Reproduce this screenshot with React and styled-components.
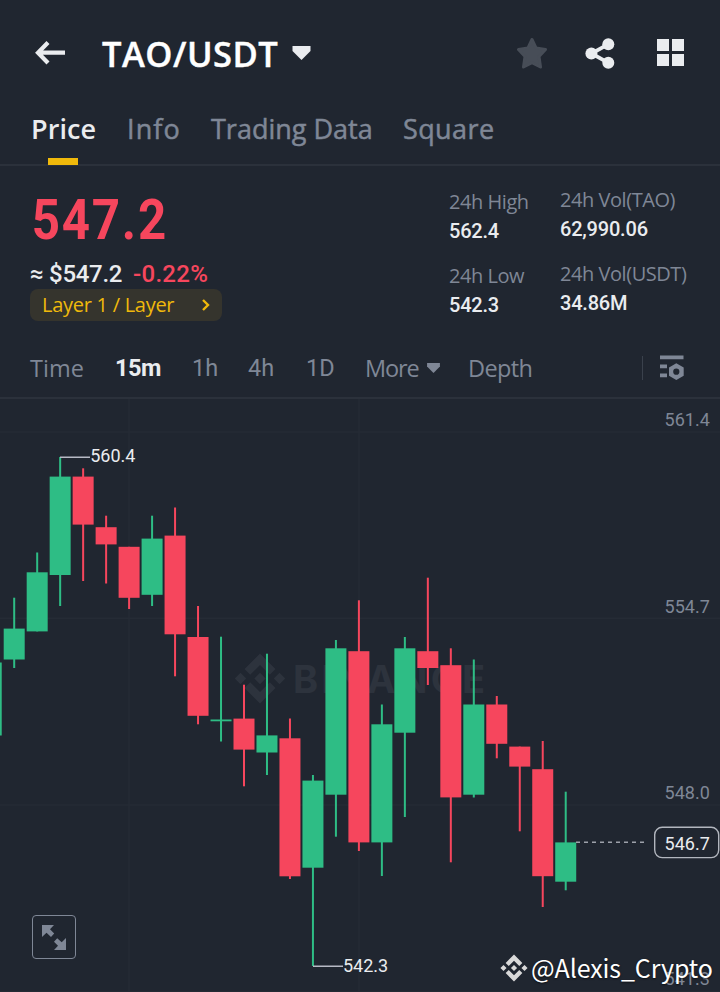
import React from "react";
import styled, { createGlobalStyle } from "styled-components";

const colors = {
  bg: "#202630",
  line: "#2b313b",
  text: "#eaecef",
  muted: "#7f8796",
  up: "#2ebd85",
  down: "#f6465d",
  accent: "#f0b90b"
};

const words = `"Open Sans", "Noto Sans", sans-serif`;
const digits = `Roboto, "Liberation Sans", sans-serif`;

const GlobalStyle = createGlobalStyle`
  body {
    margin: 0;
    background: ${colors.bg};
  }
`;

const Screen = styled.main`
  display: flex;
  flex-direction: column;
  width: 720px;
  height: 992px;
  overflow: hidden;
  background: ${colors.bg};
  color: ${colors.text};
  font-family: ${words};
  white-space: nowrap;
`;

const Header = styled.header`
  display: flex;
  align-items: center;
  height: 106px;
  padding: 0 36px 0 35px;
  box-sizing: border-box;

  svg {
    display: block;
    flex: none;
  }
`;

const Pair = styled.h1`
  width: 190px;
  margin: 2px 0 0 37px;
  color: #fff;
  font-size: 34.5px;
  font-weight: 600;
  line-height: 48px;
  letter-spacing: 0.5px;
  -webkit-text-stroke: 0.4px;
`;

const Actions = styled.div`
  display: flex;
  align-items: center;
  gap: 38px;
  margin-left: auto;

  svg:last-child {
    margin-left: 4px;
  }
`;

const Tabs = styled.nav`
  display: flex;
  height: 60px;
  padding-left: 31px;
  box-sizing: border-box;
  border-bottom: 2px solid ${colors.line};
`;

const Tab = styled.div`
  position: relative;
  width: ${p => p.$width}px;
  margin-right: 31px;
  color: ${p => (p.$active ? colors.text : colors.muted)};
  font-size: 27px;
  font-weight: ${p => (p.$active ? 600 : 500)};
  line-height: 45px;
  letter-spacing: ${p => p.$spacing || 0}px;
  -webkit-text-stroke: ${p => (p.$active ? 0 : 0.5)}px;

  &::after {
    content: "";
    display: ${p => (p.$active ? "block" : "none")};
    position: absolute;
    left: 17px;
    top: 52px;
    width: 30px;
    height: 6.5px;
    background: ${colors.accent};
  }
`;

const Summary = styled.section`
  display: flex;
  height: 170px;
  padding-left: 30px;
  box-sizing: border-box;
`;

const Quote = styled.div`
  width: 419px;
  padding-top: 22px;
`;

const LastPrice = styled.div`
  height: 72px;
  padding-left: 2px;
  color: ${colors.down};
  font: 700 56px/64px ${digits};
  letter-spacing: 2px;
  transform: scaleX(0.88);
  transform-origin: left;
`;

const Converted = styled.div`
  display: flex;
  height: 29px;
  font: 500 24px/28px ${digits};
`;

const Fiat = styled.span`
  width: 103px;
  letter-spacing: -0.3px;
`;

const Change = styled.span`
  color: ${colors.down};
  letter-spacing: 0.3px;
`;

const Tag = styled.div`
  display: flex;
  align-items: center;
  justify-content: space-between;
  width: 192px;
  height: 32px;
  padding: 0 12px 1px;
  box-sizing: border-box;
  border-radius: 8px;
  background: #35342d;
  color: ${colors.accent};
  font-size: 20px;
  line-height: 28px;
  letter-spacing: -0.27px;
`;

const Stats = styled.div`
  width: ${p => p.$width}px;
  padding-top: ${p => p.$top}px;
`;

const Stat = styled.div`
  height: 74px;
`;

const StatLabel = styled.div`
  color: ${colors.muted};
  font-size: 20px;
  line-height: 28px;
  letter-spacing: -0.45px;
`;

const StatValue = styled.div`
  font: 500 20px/30px ${digits};
  letter-spacing: -0.2px;
`;

const Intervals = styled.nav`
  display: flex;
  align-items: center;
  height: 63px;
  padding: 2px 36px 0 30px;
  box-sizing: border-box;
  border-bottom: 2px solid ${colors.line};

  svg {
    display: block;
    flex: none;
  }
`;

const Interval = styled.div`
  display: flex;
  align-items: center;
  gap: 8px;
  width: ${p => p.$width}px;
  color: ${p => (p.$active ? colors.text : colors.muted)};
  font-family: ${p => (p.$numeric ? digits : words)};
  font-size: 23.5px;
  font-weight: ${p => (p.$active ? 700 : 400)};
  line-height: 32px;
  letter-spacing: ${p => p.$spacing || 0}px;
`;

const Divider = styled.div`
  width: 1px;
  height: 24px;
  margin: 0 17px 0 auto;
  background: #3a414c;
`;

const ChartArea = styled.section`
  position: relative;
  height: 593px;

  > svg {
    display: block;
  }
`;

const ExpandButton = styled.button`
  position: absolute;
  left: 32px;
  top: 516px;
  display: flex;
  align-items: center;
  justify-content: center;
  width: 44px;
  height: 44px;
  padding: 0;
  border: 1.5px solid ${colors.muted};
  border-radius: 4px;
  background: none;
`;

const Author = styled.div`
  position: absolute;
  left: 500px;
  top: 550px;
  display: flex;
  align-items: center;
  gap: 3px;
  height: 38px;
  color: #fff;
  font: 400 25px/38px "Noto Sans CJK SC", sans-serif;
  letter-spacing: -0.1px;
  text-shadow: 0 1px 2px rgba(0, 0, 0, 0.6);
`;

const AuthorName = styled.span`
  margin-top: -3px;
`;

const BackIcon = () => (
  <svg width="30" height="24" viewBox="0 0 30 24">
    <path
      d="M30 11.7H3.5M13 1.5L3 11.7L13 22"
      fill="none"
      stroke={colors.text}
      strokeWidth="4.2"
    />
  </svg>
);

const Caret = ({ width, height, color }) => (
  <svg width={width} height={height} viewBox="0 0 18 14">
    <path d="M0 0H18V5L9 14L0 5Z" fill={color} />
  </svg>
);

const StarIcon = () => (
  <svg width="30" height="31" viewBox="0 0 30 31">
    <path
      d="M15 1.5L19 10L28.5 11.5L22 18.5L23.5 29L15 24.6L6.5 29L8 18.5L1.5 11.5L11 10Z"
      fill="#474d57"
      stroke="#474d57"
      strokeWidth="3"
      strokeLinejoin="round"
    />
  </svg>
);

const ShareIcon = () => (
  <svg width="30" height="31" viewBox="0 0 30 31">
    <path
      d="M23 6.3L6.5 15.5L23 24.7"
      fill="none"
      stroke={colors.text}
      strokeWidth="3.8"
    />
    <g fill={colors.text}>
      <circle cx="23.3" cy="6.2" r="6" />
      <circle cx="6.4" cy="15.5" r="6" />
      <circle cx="23.3" cy="24.7" r="6" />
    </g>
  </svg>
);

const GridIcon = () => (
  <svg width="27" height="28" viewBox="0 0 27 28">
    <path
      d="M0 0H12V12H0ZM15 0H27V12H15ZM0 15H12V27H0ZM15 15H27V27H15Z"
      fill={colors.text}
    />
  </svg>
);

const SettingsIcon = () => (
  <svg width="24" height="25" viewBox="0 0 24 25">
    <path
      d="M0 .5H23.5V4.3H0ZM0 9.5H7V13.3H0ZM0 18.5H7V22.3H0Z"
      fill={colors.muted}
    />
    <path
      d="M16.3 8.3L23.7 12.5V20.8L16.3 25L9 20.8V12.5ZM16.3 13.6A3.1 3.1 0 1 0 16.3 19.8A3.1 3.1 0 1 0 16.3 13.6Z"
      fill={colors.muted}
      fillRule="evenodd"
    />
  </svg>
);

const ExpandIcon = () => (
  <svg width="24" height="25" viewBox="0 0 24 25">
    <path
      d="M0 0H12L8 4.2L12.2 8.5L9 12L4.5 7.7L0 12ZM24 25H12L16 20.8L12 16.8L15.2 13.2L19.7 17.3L24 13Z"
      fill={colors.muted}
    />
  </svg>
);

const LogoShape = () => (
  <path d="M0-25L15.5-9.5L9.8-3.8L0-13.5L-9.8-3.8L-15.5-9.5ZM0 25L15.5 9.5L9.8 3.8L0 13.5L-9.8 3.8L-15.5 9.5ZM0-5.7L5.7 0L0 5.7L-5.7 0ZM-19.5-5.7L-13.8 0L-19.5 5.7L-25.2 0ZM19.5-5.7L25.2 0L19.5 5.7L13.8 0Z" />
);

// [direction, high, body top, body bottom, low], in chart pixels
const candles = [
  ["up", 662.5, 662.5, 735.5, 735.5],
  ["up", 597.7, 628.6, 659.5, 668],
  ["up", 552.5, 572.3, 631.4, 631.4],
  ["up", 457, 476.6, 575, 606],
  ["down", 468.3, 476.6, 524.6, 581],
  ["down", 515.7, 527.2, 544.4, 583.5],
  ["down", 546.8, 546.8, 597.8, 609],
  ["up", 515.7, 538.6, 594.8, 606],
  ["down", 507.5, 535.6, 634.3, 676.3],
  ["down", 606, 637, 715.8, 724.3],
  ["up", 636.7, 719.5, 721.3, 741.5],
  ["down", 684.7, 718.6, 749.6, 786.3],
  ["up", 653.7, 735.4, 752.5, 775],
  ["down", 718.5, 738.3, 876.3, 879],
  ["up", 775, 780.6, 867.7, 966],
  ["up", 640, 648.3, 794.7, 836.7],
  ["down", 600.3, 651.2, 842.4, 851],
  ["up", 704.5, 724.3, 842.4, 876],
  ["up", 637, 648.3, 732.7, 817],
  ["down", 577.7, 651.2, 668, 685],
  ["down", 648.3, 665.2, 797.4, 862.3],
  ["up", 659.5, 704.5, 794.7, 797.5],
  ["down", 696, 704.5, 743.8, 758.3],
  ["down", 746.6, 746.6, 766.6, 831.3],
  ["down", 741, 769.2, 876.2, 907],
  ["up", 791.7, 842.4, 881.7, 890.3]
];

const Candle = ({ index, candle: [direction, high, top, bottom, low] }) => {
  const x = 14.2 + (index - 1) * 22.98;
  return (
    <g fill={colors[direction]}>
      <rect x={x - 1} y={high} width="2" height={low - high} />
      <rect x={x - 10.5} y={top} width="21" height={bottom - top} />
    </g>
  );
};

const Chart = () => (
  <svg width="720" height="593" viewBox="0 399 720 593" fontFamily={digits}>
    <path
      d="M0 432H720M0 618.3H720M0 805H720M0 991.5H720M129 399V992M359 399V992"
      stroke="#252b35"
      strokeWidth="1.5"
    />
    <g fill="#2d333d">
      <g transform="translate(260 678.5)">
        <LogoShape />
      </g>
      <text
        x="293"
        y="692.5"
        fontFamily="Inter, sans-serif"
        fontSize="38"
        fontWeight="700"
        textLength="192"
      >
        BINANCE
      </text>
    </g>
    {candles.map((candle, i) => (
      <Candle key={i} index={i} candle={candle} />
    ))}
    <path
      d="M60 457.3H90M313 966.2H343"
      stroke="#b7bac5"
      strokeWidth="1.4"
      fill="none"
    />
    <path
      d="M576 842.3H645"
      stroke="#9da1aa"
      strokeWidth="1.5"
      strokeDasharray="4 4"
    />
    <g fill={colors.text} fontSize="18">
      <text x="90.2" y="461.5">560.4</text>
      <text x="343" y="971.5">542.3</text>
    </g>
    <g fill={colors.muted} fontSize="18">
      <text x="664.6" y="425.5">561.4</text>
      <text x="664.6" y="612.5">554.7</text>
      <text x="664.6" y="798.6">548.0</text>
      <text x="664.6" y="985.3">541.3</text>
    </g>
    <rect
      x="654.7"
      y="827.2"
      width="64"
      height="30.4"
      rx="7.5"
      fill={colors.bg}
      stroke="#b2b6be"
      strokeWidth="1.4"
    />
    <text x="664.6" y="849.5" fontSize="18" fill={colors.text}>
      546.7
    </text>
  </svg>
);

export default () => (
  <Screen>
    <GlobalStyle />
    <Header>
      <BackIcon />
      <Pair>TAO/USDT</Pair>
      <Caret width={19} height={14} color={colors.text} />
      <Actions>
        <StarIcon />
        <ShareIcon />
        <GridIcon />
      </Actions>
    </Header>
    <Tabs>
      <Tab $active $width={65} $spacing={0.1}>Price</Tab>
      <Tab $width={53} $spacing={1.1}>Info</Tab>
      <Tab $width={161}>Trading Data</Tab>
      <Tab $width={91} $spacing={0.4}>Square</Tab>
    </Tabs>
    <Summary>
      <Quote>
        <LastPrice>547.2</LastPrice>
        <Converted>
          <Fiat>≈ $547.2</Fiat>
          <Change>-0.22%</Change>
        </Converted>
        <Tag>
          Layer 1 / Layer
          <svg width="8" height="12" viewBox="0 0 8 12">
            <path
              d="M1 1L6 6L1 11"
              fill="none"
              stroke={colors.accent}
              strokeWidth="2.4"
            />
          </svg>
        </Tag>
      </Quote>
      <Stats $width={111} $top={22}>
        <Stat>
          <StatLabel>24h High</StatLabel>
          <StatValue>562.4</StatValue>
        </Stat>
        <Stat>
          <StatLabel>24h Low</StatLabel>
          <StatValue>542.3</StatValue>
        </Stat>
      </Stats>
      <Stats $width={150} $top={20}>
        <Stat>
          <StatLabel>24h Vol(TAO)</StatLabel>
          <StatValue>62,990.06</StatValue>
        </Stat>
        <Stat>
          <StatLabel>24h Vol(USDT)</StatLabel>
          <StatValue>34.86M</StatValue>
        </Stat>
      </Stats>
    </Summary>
    <Intervals>
      <Interval $width={85}>Time</Interval>
      <Interval $width={77} $active $numeric $spacing={-0.5}>15m</Interval>
      <Interval $width={56} $numeric>1h</Interval>
      <Interval $width={58} $numeric>4h</Interval>
      <Interval $width={59} $numeric>1D</Interval>
      <Interval $width={103} $spacing={-1.1}>
        More
        <Caret width={13} height={10} color={colors.muted} />
      </Interval>
      <Interval $width={64} $spacing={-0.6}>Depth</Interval>
      <Divider />
      <SettingsIcon />
    </Intervals>
    <ChartArea>
      <Chart />
      <ExpandButton>
        <ExpandIcon />
      </ExpandButton>
      <Author>
        <svg width="28" height="28" viewBox="-26 -26 52 52" fill="#d9d9d9">
          <LogoShape />
        </svg>
        <AuthorName>@Alexis_Crypto</AuthorName>
      </Author>
    </ChartArea>
  </Screen>
);
